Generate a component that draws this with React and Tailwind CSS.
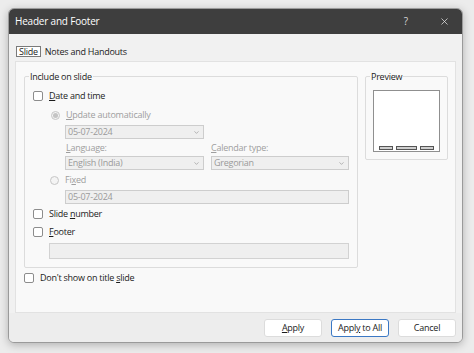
import { X, ChevronDown } from "lucide-react";

const font = { fontFamily: '"Open Sans", "Noto Sans", sans-serif' };

function Checkbox({ label, className = "" }) {
    return (
        <div className={`flex h-[14px] items-center gap-[6px] ${className}`}>
            <span className="box-border h-[10px] w-[10px] rounded-[2px] border border-[#8c8c8c] bg-white" />
            <span className="text-[9px] tracking-[-0.25px] text-[#1b1b1b]">{label}</span>
        </div>
    );
}

function Radio({ label, checked, className = "" }) {
    return (
        <div className={`flex h-[14px] items-center gap-[6px] ${className}`}>
            <span className="box-border flex h-[9px] w-[9px] items-center justify-center rounded-full border border-[#c6c6c6] bg-[#f4f4f4]">
                {checked && <span className="h-[5px] w-[5px] rounded-full bg-[#c4c4c4]" />}
            </span>
            <span className="text-[9px] tracking-[-0.25px] text-[#9e9e9e]">{label}</span>
        </div>
    );
}

function Select({ value, className = "" }) {
    return (
        <div className={`box-border flex h-[14px] items-center justify-between border border-[#cdcdcd] bg-[#efefef] pl-[2px] pr-[3px] ${className}`}>
            <span className="text-[9px] tracking-[-0.25px] text-[#9a9a9a]">{value}</span>
            <ChevronDown size={7} strokeWidth={2} className="text-[#8a8a8a]" />
        </div>
    );
}

function Button({ children, primary }) {
    return (
        <div
            className={`box-border flex h-[18px] w-[58px] items-center justify-center rounded-[3px] border bg-white text-[9px] tracking-[-0.25px] text-[#1b1b1b] ${
                primary ? "border-[#3b78c4]" : "border-[#dcdcdc]"
            }`}
        >
            <span>{children}</span>
        </div>
    );
}

export default function App() {
    return (
        <div className="h-[353px] w-[474px] bg-[#ececec] pl-[8px] pt-[8px]" style={font}>
            <div className="box-border flex h-[335px] w-[455px] flex-col overflow-hidden rounded-[6px] border border-[#9a9a9a] bg-[#f1f1f1] shadow-[0_2px_8px_rgba(0,0,0,0.25)]">
                {/* --- TITLE BAR --- */}
                <div className="flex h-[25px] shrink-0 items-center bg-[#3e3e3e] pl-[6px] pr-[12px] text-white">
                    <span className="text-[10px] tracking-[-0.2px]">Header and Footer</span>
                    <span className="ml-auto mr-[31px] text-[10px] text-[#d8d8d8]">?</span>
                    <X size={11} strokeWidth={1.6} className="text-[#e8e8e8]" />
                </div>

                {/* --- TABS --- */}
                <div className="mt-[12px] flex h-[11px] items-center pl-[7px]">
                    <span className="box-border flex h-[11px] items-center border border-[#7a7a7a] bg-white px-[2px] text-[9px] tracking-[-0.25px] text-[#1b1b1b]">
                        Slide
                    </span>
                    <span className="ml-[4px] text-[9px] tracking-[-0.25px] text-[#1b1b1b]">Notes and Handouts</span>
                </div>

                {/* --- PANEL --- */}
                <div className="mx-[6px] mt-[4px] box-border flex h-[252px] flex-col border border-[#e2e2e2] bg-[#f9f9f9] pl-[8px] pt-[14px]">
                    <div className="flex items-start gap-[7px]">
                        {/* Include on slide */}
                        <div className="relative box-border h-[192px] w-[334px] rounded-[2px] border border-[#dcdcdc] pl-[8px] pt-[12px]">
                            <span className="absolute -top-[6px] left-[4px] bg-[#f9f9f9] px-[1px] text-[9px] leading-[11px] tracking-[-0.25px] text-[#1b1b1b]">
                                Include on slide
                            </span>
                            <Checkbox label={<><span className="underline">D</span>ate and time</>} />
                            <Radio className="ml-[18px] mt-[5px]" checked label={<><span className="underline">U</span>pdate automatically</>} />
                            <Select className="ml-[32px] mt-[3px] w-[139px]" value="05-07-2024" />
                            <div className="ml-[33px] mt-[3px] flex h-[12px] items-center text-[9px] tracking-[-0.25px] text-[#9e9e9e]">
                                <span className="w-[145px]"><span className="underline">L</span>anguage:</span>
                                <span><span className="underline">C</span>alendar type:</span>
                            </div>
                            <div className="ml-[32px] mt-[2px] flex gap-[7px]">
                                <Select className="w-[139px]" value="English (India)" />
                                <Select className="w-[138px]" value="Gregorian" />
                            </div>
                            <Radio className="ml-[17px] mt-[3px]" label={<>Fi<span className="underline">x</span>ed</>} />
                            <Select className="ml-[32px] mt-[3px] w-[284px] [&>svg]:hidden" value="05-07-2024" />
                            <Checkbox className="mt-[3px]" label={<>Slide <span className="underline">n</span>umber</>} />
                            <Checkbox className="mt-[4px]" label={<><span className="underline">F</span>ooter</>} />
                            <div className="ml-[16px] mt-[4px] box-border h-[16px] w-[300px] border border-[#d2d2d2] bg-[#efefef]" />
                        </div>

                        {/* Preview */}
                        <div className="relative box-border h-[84px] w-[83px] rounded-[2px] border border-[#dcdcdc] pl-[7px] pt-[13px]">
                            <span className="absolute -top-[6px] left-[4px] bg-[#f9f9f9] px-[1px] text-[9px] leading-[11px] tracking-[-0.25px] text-[#1b1b1b]">
                                Preview
                            </span>
                            <div className="box-border flex h-[62px] w-[67px] items-end gap-[3px] border border-[#8f8f8f] bg-white px-[5px] pb-[1px]">
                                <span className="box-border h-[4px] w-[14px] border border-[#555] bg-[#cfcfcf]" />
                                <span className="box-border h-[4px] w-[22px] border border-[#555] bg-[#cfcfcf]" />
                                <span className="box-border h-[4px] w-[14px] border border-[#555] bg-[#cfcfcf]" />
                            </div>
                        </div>
                    </div>
                    <Checkbox
                        className="mt-[3px]"
                        label={<>Don't show on title <span className="underline">s</span>lide</>}
                    />
                </div>

                {/* --- FOOTER BUTTONS --- */}
                <div className="flex flex-1 items-center justify-end gap-[9px] bg-[#ededed] pr-[6px] pt-[1px]">
                    <Button><span className="underline">A</span>pply</Button>
                    <Button primary>Appl<span className="underline">y</span> to All</Button>
                    <Button>Cancel</Button>
                </div>
            </div>
        </div>
    );
}
